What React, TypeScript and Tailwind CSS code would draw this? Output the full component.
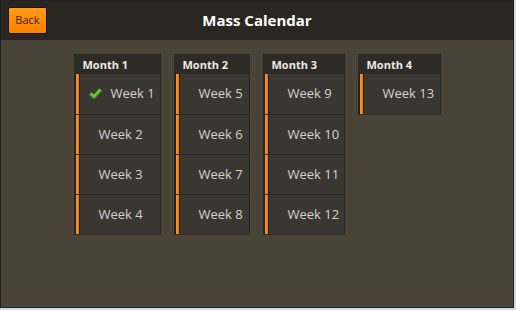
const months = [
  { name: 'Month 1', width: 'w-[87px]', weeks: [1, 2, 3, 4] },
  { name: 'Month 2', width: 'w-[76px]', weeks: [5, 6, 7, 8] },
  { name: 'Month 3', width: 'w-[82px]', weeks: [9, 10, 11, 12] },
  { name: 'Month 4', width: 'w-[83px]', weeks: [13] },
]

const done = new Set([1])

function Check() {
  return (
    <svg width="13" height="12" viewBox="0 0 13 12" className="absolute left-[14px] top-[13px]">
      <path d="M1.4 6.6 L5 10 L11.6 2.4" fill="none" stroke="#3c8f1a" strokeWidth="3.8" strokeLinejoin="round" />
      <path d="M1.6 6.4 L5 9.4 L11.4 2.4" fill="none" stroke="#66d231" strokeWidth="2.2" strokeLinejoin="round" />
    </svg>
  )
}

function MonthColumn({ name, width, weeks }: { name: string; width: string; weeks: number[] }) {
  return (
    <div className={`${width} flex flex-col border border-[#2b2824] bg-[#3a3632]`}>
      <div className="h-[19px] bg-[#2e2b27] pl-[8px] text-[11px] font-bold leading-[19px] text-[#ece9e4]">{name}</div>
      {weeks.map((week, i) => (
        <div
          key={week}
          className={`relative flex h-[40px] items-center pl-[24px] text-[13px] text-[#d6d3cd] ${
            i > 0 ? 'border-t border-[#2b2824]' : ''
          }`}
        >
          <div className="absolute inset-y-0 left-0 w-[5px] border-x border-[#1d2230] bg-gradient-to-r from-[#ff9b1f] to-[#e87500]" />
          {done.has(week) && <Check />}
          <span className={done.has(week) ? 'ml-[12px]' : ''}>Week {week}</span>
        </div>
      ))}
    </div>
  )
}

export default function App() {
  return (
    <div className="h-[310px] w-[516px] bg-[#cbdeec] font-['Open_Sans',sans-serif]">
      <div className="flex h-[308px] w-[514px] flex-col border border-[#232020] bg-[#4a4338]">
        <header className="relative flex h-[39px] shrink-0 items-center justify-center bg-[#2a2622]">
          <button
            type="button"
            className="absolute left-[7px] top-[6px] h-[27px] w-[39px] rounded-[2px] border border-[#1b1713] bg-gradient-to-b from-[#ff9a18] to-[#ff8000] text-[11px] text-[#3a2508]"
          >
            Back
          </button>
          <h1 className="text-[15px] font-bold text-white">Mass Calendar</h1>
        </header>
        <main className="flex items-start justify-center gap-[13px] pt-[14px]">
          {months.map((month) => (
            <MonthColumn key={month.name} {...month} />
          ))}
        </main>
      </div>
    </div>
  )
}
